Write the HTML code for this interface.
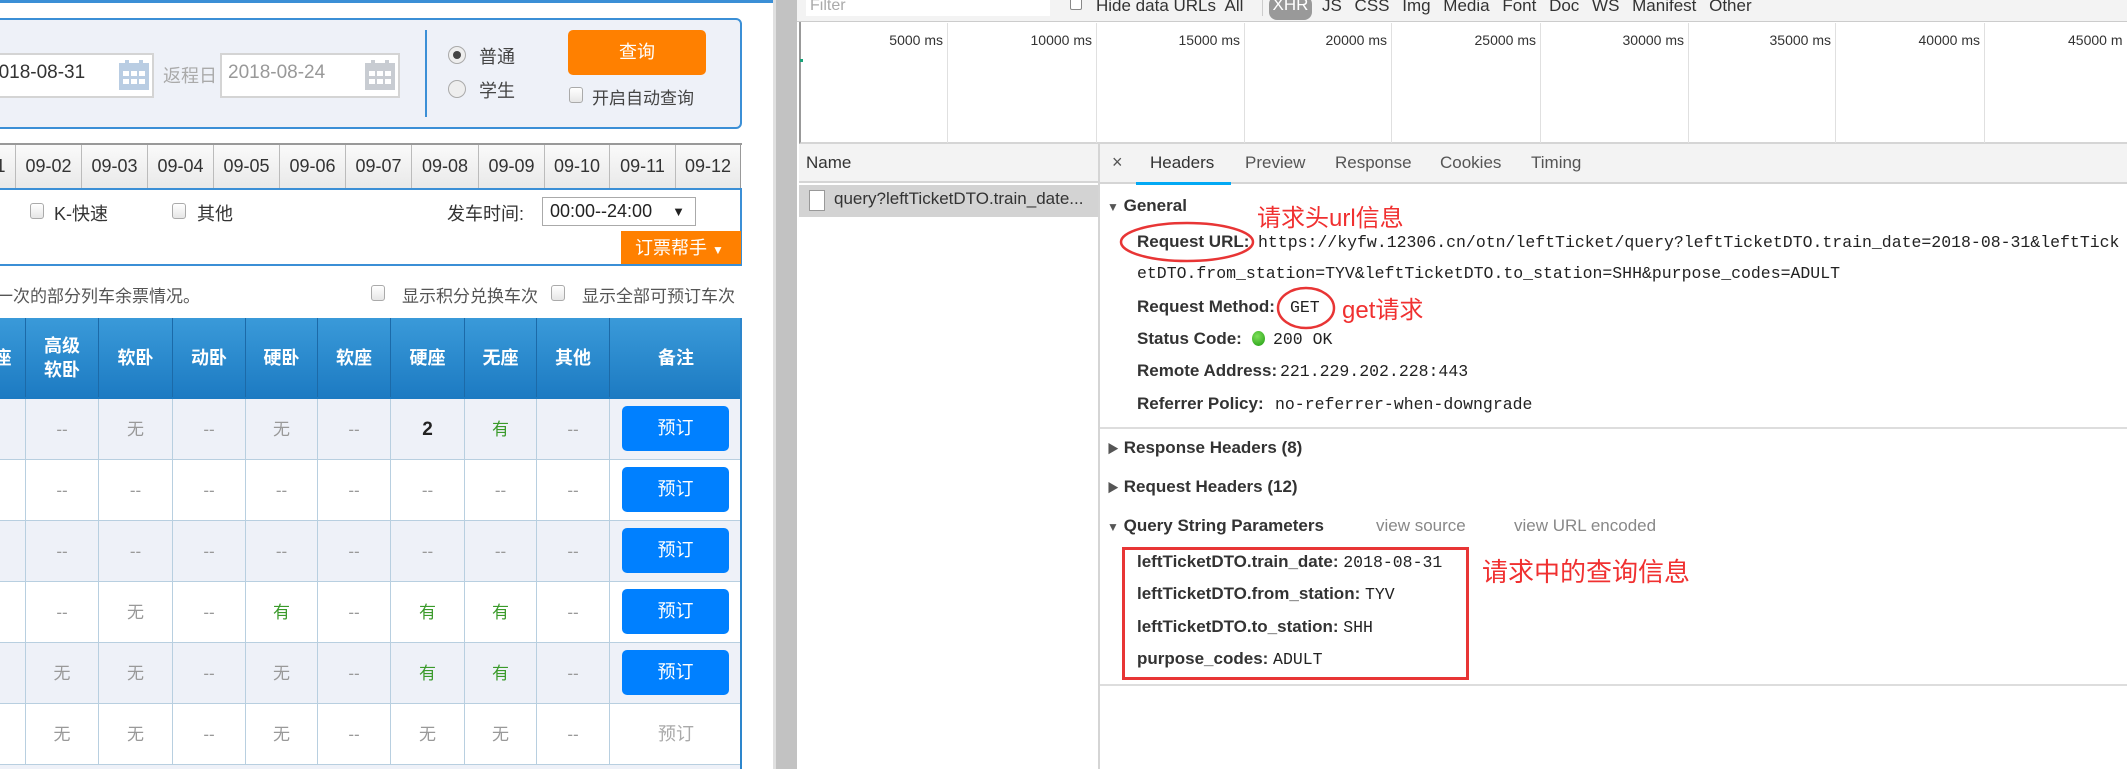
<!DOCTYPE html>
<html style="overflow:hidden;width:2127px;height:769px"><head><meta charset="utf-8"><style>
*{margin:0;padding:0;box-sizing:border-box}
body{width:2127px;height:769px;overflow:hidden;background:#fff;font-family:"Liberation Sans","Noto Sans CJK SC",sans-serif}
#w{position:relative;width:2127px;height:769px;overflow:hidden}
.a{position:absolute;white-space:nowrap}
.mono{font-family:"Liberation Mono",monospace}
.cb{position:absolute;width:14px;height:16px;border:1px solid #aaa;border-radius:3px;background:linear-gradient(#fff,#e6e6e6)}
.dc{position:absolute;top:145px;height:43px;border-left:1px solid #bbb;background:linear-gradient(#fafafa,#e9e9e9);font-size:18px;line-height:43px;text-align:center;color:#333}
.th{position:absolute;top:318px;height:79px;color:#fff;font-weight:bold;font-size:18px;text-align:center;display:flex;align-items:center;justify-content:center;line-height:24px;border-left:1px solid #1c6aa8}
.row{position:absolute;left:0;width:742px;height:61px;border-bottom:1px solid #b8cfe0}
.c{position:absolute;top:0;height:61px;line-height:61px;text-align:center;font-size:17px;color:#999;border-left:1px solid #b8cfe0}
.g{color:#3a9a2a}
.btn{position:absolute;left:622px;top:7px;width:107px;height:45px;background:#0080ff;border-radius:5px;color:#fff;font-size:18px;line-height:45px;text-align:center}
.tl{position:absolute;top:23px;height:120px;border-left:1px solid #e0e0e0}
.tlab{position:absolute;top:32px;font-size:14px;color:#333;text-align:right;width:100px}
.lbl{font-weight:bold;color:#333;font-size:17px}
.val{font-family:"Liberation Mono",monospace;font-size:16.5px;color:#222}
.red{color:#f03030}
</style></head><body><div id="w">

<div class="a" style="left:0;top:0;width:773px;height:3px;background:#3b8fd6"></div>
<div class="a" style="left:-10px;top:18px;width:752px;height:111px;border:2px solid #3b8fd6;border-radius:0 6px 6px 0;background:#eef1f8"></div>
<div class="a" style="left:-10px;top:53px;width:164px;height:45px;border:2px solid #d4d4d4;background:#fff"></div>
<div class="a" style="left:-12px;top:62px;font-size:19px;color:#333">2018-08-31</div>
<svg class="a" style="left:119px;top:60px" width="30" height="30"><rect x="0" y="3" width="30" height="27" fill="#b9cde3"/><rect x="6" y="0" width="4" height="7" fill="#b9cde3"/><rect x="20" y="0" width="4" height="7" fill="#b9cde3"/><g fill="#fff"><rect x="4" y="11" width="6" height="5"/><rect x="12" y="11" width="6" height="5"/><rect x="20" y="11" width="6" height="5"/><rect x="4" y="19" width="6" height="5"/><rect x="12" y="19" width="6" height="5"/><rect x="20" y="19" width="6" height="5"/></g></svg>
<div class="a" style="left:163px;top:62px;font-size:18px;color:#aaa">返程日</div>
<div class="a" style="left:220px;top:53px;width:180px;height:45px;border:2px solid #d4d4d4;background:#fff"></div>
<div class="a" style="left:228px;top:62px;font-size:19px;color:#999">2018-08-24</div>
<svg class="a" style="left:365px;top:60px" width="30" height="30"><rect x="0" y="3" width="30" height="27" fill="#c8ccd2"/><rect x="6" y="0" width="4" height="7" fill="#c8ccd2"/><rect x="20" y="0" width="4" height="7" fill="#c8ccd2"/><g fill="#fff"><rect x="4" y="11" width="6" height="5"/><rect x="12" y="11" width="6" height="5"/><rect x="20" y="11" width="6" height="5"/><rect x="4" y="19" width="6" height="5"/><rect x="12" y="19" width="6" height="5"/><rect x="20" y="19" width="6" height="5"/></g></svg>
<div class="a" style="left:425px;top:30px;width:2px;height:87px;background:#3b8fd6"></div>
<div class="a" style="left:448px;top:46px;width:18px;height:18px;border-radius:50%;border:1px solid #aaa;background:#eee"><div style="margin:4px;width:8px;height:8px;border-radius:50%;background:#444"></div></div>
<div class="a" style="left:479px;top:43px;font-size:18px;color:#444">普通</div>
<div class="a" style="left:448px;top:80px;width:18px;height:18px;border-radius:50%;border:1px solid #aaa;background:#eee"></div>
<div class="a" style="left:479px;top:77px;font-size:18px;color:#444">学生</div>
<div class="a" style="left:568px;top:30px;width:138px;height:45px;background:#ff8000;border-radius:5px;color:#fff;font-size:18px;line-height:45px;text-align:center">查询</div>
<div class="cb" style="left:569px;top:87px"></div>
<div class="a" style="left:592px;top:84px;font-size:17px;color:#444">开启自动查询</div>

<div class="a" style="left:0;top:143px;width:742px;height:2px;background:#999"></div>
<div class="dc" style="left:-51px;width:66px">09-01</div>
<div class="dc" style="left:15px;width:66px">09-02</div>
<div class="dc" style="left:81px;width:66px">09-03</div>
<div class="dc" style="left:147px;width:66px">09-04</div>
<div class="dc" style="left:213px;width:66px">09-05</div>
<div class="dc" style="left:279px;width:66px">09-06</div>
<div class="dc" style="left:345px;width:66px">09-07</div>
<div class="dc" style="left:411px;width:67px">09-08</div>
<div class="dc" style="left:478px;width:66px">09-09</div>
<div class="dc" style="left:544px;width:65px">09-10</div>
<div class="dc" style="left:609px;width:66px">09-11</div>
<div class="dc" style="left:675px;width:66px;border-right:1px solid #999">09-12</div>
<div class="a" style="left:0;top:188px;width:742px;height:2px;background:#3b8fd6"></div>
<div class="a" style="left:740px;top:188px;width:2px;height:78px;background:#3b8fd6"></div>
<div class="cb" style="left:30px;top:203px"></div>
<div class="a" style="left:54px;top:200px;font-size:18px;color:#333">K-快速</div>
<div class="cb" style="left:172px;top:203px"></div>
<div class="a" style="left:197px;top:200px;font-size:18px;color:#333">其他</div>
<div class="a" style="left:447px;top:200px;font-size:18px;color:#333">发车时间:</div>
<div class="a" style="left:542px;top:197px;width:154px;height:29px;border:1px solid #aaa;background:#fff;font-size:18px;line-height:27px;padding-left:7px;color:#222">00:00--24:00<span style="position:absolute;right:10px;font-size:13px">▼</span></div>
<div class="a" style="left:621px;top:231px;width:120px;height:34px;background:#ff8000;color:#fff;font-size:18px;line-height:34px;padding-left:14px">订票帮手 <span style="font-size:12px">▼</span></div>
<div class="a" style="left:0;top:264px;width:742px;height:2px;background:#3b8fd6"></div>
<div class="a" style="left:-4px;top:282px;font-size:17px;color:#555">一次的部分列车余票情况。</div>
<div class="cb" style="left:371px;top:285px"></div>
<div class="a" style="left:402px;top:282px;font-size:17px;color:#555">显示积分兑换车次</div>
<div class="cb" style="left:551px;top:285px"></div>
<div class="a" style="left:582px;top:282px;font-size:17px;color:#555">显示全部可预订车次</div>

<div class="a" style="left:0;top:318px;width:742px;height:81px;background:linear-gradient(#3a9ad9,#1c7ac2)"></div>
<div class="th" style="left:-20px;width:45px;border:none">座</div>
<div class="th" style="left:25px;width:73px">高级<br>软卧</div>
<div class="th" style="left:98px;width:74px">软卧</div>
<div class="th" style="left:172px;width:73px">动卧</div>
<div class="th" style="left:245px;width:72px">硬卧</div>
<div class="th" style="left:317px;width:73px">软座</div>
<div class="th" style="left:390px;width:74px">硬座</div>
<div class="th" style="left:464px;width:72px">无座</div>
<div class="th" style="left:536px;width:73px">其他</div>
<div class="th" style="left:609px;width:133px">备注</div>

<div class="row" style="top:399px;background:#eef1f8">
<div class="c" style="left:25px;width:73px">--</div><div class="c" style="left:98px;width:74px">无</div><div class="c" style="left:172px;width:73px">--</div><div class="c" style="left:245px;width:72px">无</div><div class="c" style="left:317px;width:73px">--</div><div class="c" style="left:390px;width:74px;color:#222;font-weight:bold;font-size:19px">2</div><div class="c g" style="left:464px;width:72px">有</div><div class="c" style="left:536px;width:73px">--</div><div class="c" style="left:609px;width:133px"></div><div class="btn">预订</div></div>
<div class="row" style="top:460px;background:#fff">
<div class="c" style="left:25px;width:73px">--</div><div class="c" style="left:98px;width:74px">--</div><div class="c" style="left:172px;width:73px">--</div><div class="c" style="left:245px;width:72px">--</div><div class="c" style="left:317px;width:73px">--</div><div class="c" style="left:390px;width:74px">--</div><div class="c" style="left:464px;width:72px">--</div><div class="c" style="left:536px;width:73px">--</div><div class="c" style="left:609px;width:133px"></div><div class="btn">预订</div></div>
<div class="row" style="top:521px;background:#eef1f8">
<div class="c" style="left:25px;width:73px">--</div><div class="c" style="left:98px;width:74px">--</div><div class="c" style="left:172px;width:73px">--</div><div class="c" style="left:245px;width:72px">--</div><div class="c" style="left:317px;width:73px">--</div><div class="c" style="left:390px;width:74px">--</div><div class="c" style="left:464px;width:72px">--</div><div class="c" style="left:536px;width:73px">--</div><div class="c" style="left:609px;width:133px"></div><div class="btn">预订</div></div>
<div class="row" style="top:582px;background:#fff">
<div class="c" style="left:25px;width:73px">--</div><div class="c" style="left:98px;width:74px">无</div><div class="c" style="left:172px;width:73px">--</div><div class="c g" style="left:245px;width:72px">有</div><div class="c" style="left:317px;width:73px">--</div><div class="c g" style="left:390px;width:74px">有</div><div class="c g" style="left:464px;width:72px">有</div><div class="c" style="left:536px;width:73px">--</div><div class="c" style="left:609px;width:133px"></div><div class="btn">预订</div></div>
<div class="row" style="top:643px;background:#eef1f8">
<div class="c" style="left:25px;width:73px">无</div><div class="c" style="left:98px;width:74px">无</div><div class="c" style="left:172px;width:73px">--</div><div class="c" style="left:245px;width:72px">无</div><div class="c" style="left:317px;width:73px">--</div><div class="c g" style="left:390px;width:74px">有</div><div class="c g" style="left:464px;width:72px">有</div><div class="c" style="left:536px;width:73px">--</div><div class="c" style="left:609px;width:133px"></div><div class="btn">预订</div></div>
<div class="row" style="top:704px;background:#fff">
<div class="c" style="left:25px;width:73px">无</div><div class="c" style="left:98px;width:74px">无</div><div class="c" style="left:172px;width:73px">--</div><div class="c" style="left:245px;width:72px">无</div><div class="c" style="left:317px;width:73px">--</div><div class="c" style="left:390px;width:74px">无</div><div class="c" style="left:464px;width:72px">无</div><div class="c" style="left:536px;width:73px">--</div><div class="c" style="left:609px;width:133px;color:#aaa;font-size:18px">预订</div></div>
<div class="row" style="top:765px;height:4px;background:#eef1f8;border:none"></div>
<div class="a" style="left:740px;top:318px;width:2px;height:451px;background:#2d86cc"></div>

<div class="a" style="left:773px;top:0;width:3px;height:769px;background:#e0e0e0"></div>
<div class="a" style="left:776px;top:0;width:21px;height:769px;background:#c2c2c2"></div>

<div class="a" style="left:797px;top:0;width:1330px;height:22px;background:#f3f3f3;border-bottom:1px solid #ccc"></div>
<div class="a" style="left:806px;top:0;width:244px;height:16px;background:#fff;font-size:16px;color:#aaa;line-height:12px;padding-left:4px;overflow:hidden">Filter</div>
<div class="a" style="left:1070px;top:-3px;width:12px;height:13px;border:1px solid #888;border-radius:2px;background:#fff"></div>
<div class="a" style="left:1096px;top:-4px;font-size:17px;color:#333">Hide data URLs&nbsp; All</div>
<div class="a" style="left:1262px;top:0;width:1px;height:16px;background:#ccc"></div>
<div class="a" style="left:1269px;top:-4px;width:43px;height:24px;background:#999;border-radius:8px;color:#fff;font-size:17px;text-align:center;line-height:18px">XHR</div>
<div class="a" style="left:1322px;top:-4px;font-size:17px;color:#333;word-spacing:8px">JS CSS Img Media Font Doc WS Manifest Other</div>

<div class="a" style="left:799px;top:22px;width:1328px;height:122px;background:#fff;border-bottom:2px solid #d5d5d5;border-left:2px solid #999"></div>
<div class="tl" style="left:947px"></div><div class="tl" style="left:1096px"></div><div class="tl" style="left:1244px"></div><div class="tl" style="left:1391px"></div><div class="tl" style="left:1540px"></div><div class="tl" style="left:1688px"></div><div class="tl" style="left:1835px"></div><div class="tl" style="left:1984px"></div>
<div class="tlab" style="left:843px">5000 ms</div>
<div class="tlab" style="left:992px">10000 ms</div>
<div class="tlab" style="left:1140px">15000 ms</div>
<div class="tlab" style="left:1287px">20000 ms</div>
<div class="tlab" style="left:1436px">25000 ms</div>
<div class="tlab" style="left:1584px">30000 ms</div>
<div class="tlab" style="left:1731px">35000 ms</div>
<div class="tlab" style="left:1880px">40000 ms</div>
<div class="a" style="left:2068px;top:32px;font-size:14px;color:#333">45000 m</div>
<div class="a" style="left:800px;top:59px;width:3px;height:3px;background:#1aa37a"></div>

<div class="a" style="left:799px;top:144px;width:301px;height:625px;background:#fff;border-right:2px solid #d5d5d5"></div>
<div class="a" style="left:799px;top:144px;width:299px;height:39px;background:#f3f3f3;border-bottom:2px solid #d5d5d5;font-size:17px;color:#333;line-height:37px;padding-left:7px">Name</div>
<div class="a" style="left:799px;top:185px;width:299px;height:32px;background:#d3d3d3"></div>
<div class="a" style="left:809px;top:190px;width:16px;height:21px;background:#fff;border:1px solid #999"></div>
<div class="a" style="left:834px;top:189px;font-size:17px;color:#333">query?leftTicketDTO.train_date...</div>

<div class="a" style="left:1100px;top:144px;width:1027px;height:40px;background:#f3f3f3;border-bottom:2px solid #d5d5d5"></div>
<div class="a" style="left:1112px;top:152px;font-size:18px;color:#555">×</div>
<div class="a" style="left:1150px;top:153px;font-size:17px;color:#333">Headers</div>
<div class="a" style="left:1136px;top:182px;width:95px;height:3px;background:#03a9f4"></div>
<div class="a" style="left:1245px;top:153px;font-size:17px;color:#555">Preview</div>
<div class="a" style="left:1335px;top:153px;font-size:17px;color:#555">Response</div>
<div class="a" style="left:1440px;top:153px;font-size:17px;color:#555">Cookies</div>
<div class="a" style="left:1531px;top:153px;font-size:17px;color:#555">Timing</div>

<div class="a lbl" style="left:1107px;top:196px"><span style="font-size:12px;color:#555">▼</span> General</div>
<div class="a red" style="left:1257px;top:198px;font-size:24px">请求头url信息</div>
<div class="a lbl" style="left:1137px;top:232px">Request URL:</div>
<div class="a val" style="left:1258px;top:233px">https://kyfw.12306.cn/otn/leftTicket/query?leftTicketDTO.train_date=2018-08-31&amp;leftTick</div>
<div class="a val" style="left:1137px;top:264px">etDTO.from_station=TYV&amp;leftTicketDTO.to_station=SHH&amp;purpose_codes=ADULT</div>
<div class="a lbl" style="left:1137px;top:297px">Request Method:</div>
<div class="a val" style="left:1290px;top:298px">GET</div>
<div class="a red" style="left:1342px;top:290px;font-size:24px">get请求</div>
<div class="a lbl" style="left:1137px;top:329px">Status Code:</div>
<div class="a" style="left:1252px;top:331px;width:13px;height:15px;border-radius:50%;background:radial-gradient(circle at 40% 35%,#7ee05a,#1e9a10)"></div>
<div class="a val" style="left:1273px;top:330px">200 OK</div>
<div class="a lbl" style="left:1137px;top:361px">Remote Address:</div>
<div class="a val" style="left:1280px;top:362px">221.229.202.228:443</div>
<div class="a lbl" style="left:1137px;top:394px">Referrer Policy:</div>
<div class="a val" style="left:1275px;top:395px">no-referrer-when-downgrade</div>
<svg class="a" style="left:1100px;top:180px" width="400" height="180"><ellipse cx="87" cy="62" rx="66" ry="19" fill="none" stroke="#e83535" stroke-width="2.5"/><ellipse cx="206" cy="128" rx="28" ry="20" fill="none" stroke="#e83535" stroke-width="2.5"/></svg>
<div class="a" style="left:1100px;top:427px;width:1027px;height:2px;background:#ddd"></div>

<div class="a lbl" style="left:1107px;top:438px"><span style="font-size:12px;color:#555">▶</span> Response Headers (8)</div>
<div class="a lbl" style="left:1107px;top:477px"><span style="font-size:12px;color:#555">▶</span> Request Headers (12)</div>
<div class="a lbl" style="left:1107px;top:516px"><span style="font-size:12px;color:#555">▼</span> Query String Parameters</div>
<div class="a" style="left:1376px;top:516px;font-size:17px;color:#888">view source</div>
<div class="a" style="left:1514px;top:516px;font-size:17px;color:#888">view URL encoded</div>
<div class="a" style="left:1122px;top:547px;width:347px;height:133px;border:3px solid #e83535"></div>
<div class="a lbl" style="left:1137px;top:552px">leftTicketDTO.train_date: <span class="val" style="font-weight:normal">2018-08-31</span></div>
<div class="a lbl" style="left:1137px;top:584px">leftTicketDTO.from_station: <span class="val" style="font-weight:normal">TYV</span></div>
<div class="a lbl" style="left:1137px;top:617px">leftTicketDTO.to_station: <span class="val" style="font-weight:normal">SHH</span></div>
<div class="a lbl" style="left:1137px;top:649px">purpose_codes: <span class="val" style="font-weight:normal">ADULT</span></div>
<div class="a red" style="left:1482px;top:552px;font-size:26px">请求中的查询信息</div>
<div class="a" style="left:1100px;top:684px;width:1027px;height:2px;background:#ddd"></div>
</div></body></html>
